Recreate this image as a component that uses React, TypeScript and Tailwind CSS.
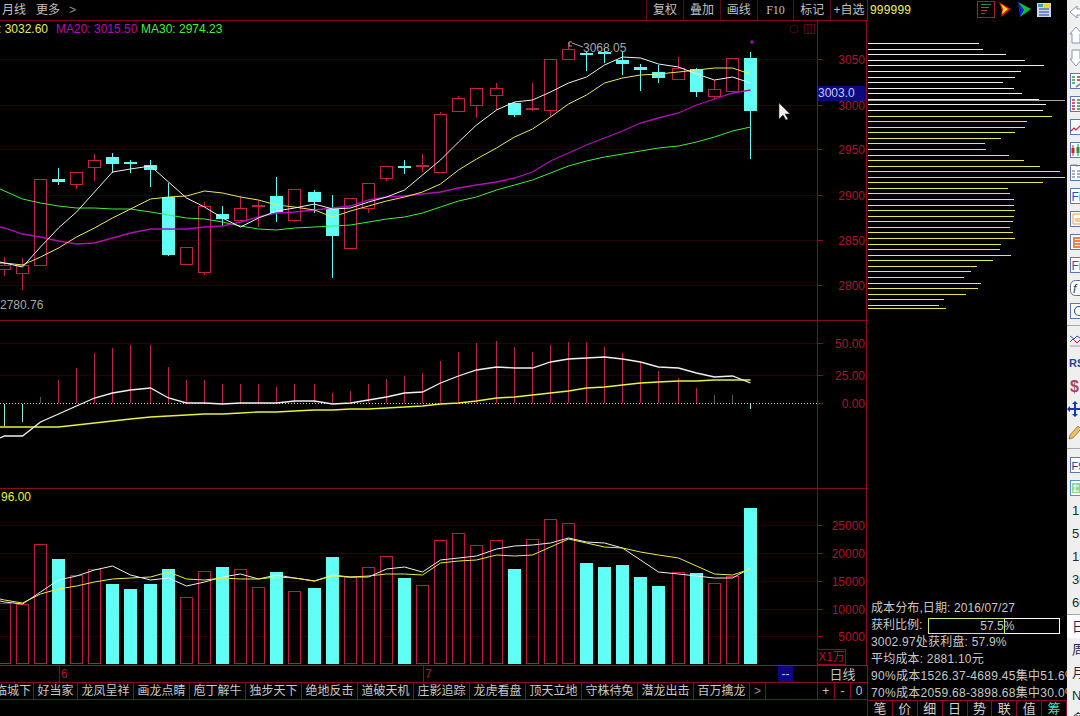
import type { ReactNode } from "react";

// candle centres, page px, kept on even pixel columns
const xs = [
  4.5, 22.5, 40.5, 59.5, 77.5, 95.5, 113.5, 131.5, 150.5, 168.5, 186.5, 204.5, 223.5, 241.5,
  259.5, 277.5, 295.5, 314.5, 332.5, 350.5, 368.5, 386.5, 405.5, 423.5, 441.5, 459.5, 477.5,
  496.5, 514.5, 532.5, 550.5, 568.5, 587.5, 605.5, 623.5, 641.5, 659.5, 678.5, 696.5, 714.5,
  732.5, 751.5,
].map((x) => Math.floor(x / 2) * 2 + 0.5);

// top, bottom, high, low, c = cyan / r = red
const candles: [number, number, number, number, string][] = [
  [265, 269, 257, 276, "r"], [265, 273, 258, 290, "r"], [179, 265, 179, 265, "r"],
  [179, 182, 168, 185, "c"], [172, 184, 172, 189, "r"], [160, 167, 154, 181, "r"],
  [157, 164, 153, 173, "c"], [162, 163, 160, 173, "c"], [165, 170, 160, 187, "c"],
  [197, 255, 183, 256, "c"], [247, 264, 247, 264, "r"], [206, 272, 202, 275, "r"],
  [214, 219, 206, 226, "c"], [208, 220, 196, 220, "r"], [205, 207, 200, 227, "r"],
  [196, 213, 177, 222, "c"], [189, 220, 189, 222, "r"], [192, 202, 190, 213, "c"],
  [209, 236, 195, 278, "c"], [198, 248, 198, 248, "r"], [183, 208, 183, 213, "r"],
  [166, 178, 166, 181, "r"], [166, 167, 160, 174, "c"], [165, 166, 154, 172, "r"],
  [114, 172, 112, 172, "r"], [98, 111, 96, 111, "r"], [88, 105, 88, 118, "r"],
  [88, 95, 83, 110, "r"], [103, 115, 102, 117, "c"], [108, 110, 83, 111, "r"],
  [59, 110, 59, 117, "r"], [49, 59, 42, 59, "r"], [53, 54, 51, 71, "c"],
  [52, 53, 48, 63, "c"], [60, 64, 52, 75, "c"], [67, 70, 64, 91, "c"],
  [72, 78, 65, 83, "c"], [68, 79, 57, 79, "r"], [69, 92, 68, 97, "c"],
  [89, 96, 80, 100, "r"], [58, 91, 58, 91, "r"], [58, 111, 52, 159, "c"],
];

const ma5 = [263, 267, 247, 228, 212, 192, 172, 169, 166, 182, 198, 207, 218, 227, 218, 211, 208, 204, 209, 208, 202, 197, 190, 175, 160, 142, 125, 110, 102, 100, 92, 83, 77, 65, 57, 58, 64, 67, 74, 80, 77, 83];
const ma10 = [263, 265, 257, 248, 237, 228, 218, 209, 199, 197, 196, 191, 193, 197, 200, 205, 207, 210, 217, 211, 206, 201, 197, 192, 184, 170, 159, 148, 137, 129, 117, 104, 95, 83, 78, 75, 74, 72, 70, 68, 68, 74];
const ma20 = [228, 234, 237, 241, 244, 243, 238, 233, 229, 229, 229, 227, 226, 222, 217, 213, 212, 210, 208, 206, 200, 197, 196, 194, 192, 188, 185, 182, 178, 172, 161, 153, 145, 138, 131, 123, 118, 113, 105, 99, 93, 90];
const ma30 = [191, 199, 203, 206, 208, 208, 209, 209, 212, 215, 218, 219, 222, 226, 229, 230, 228, 227, 226, 225, 222, 219, 217, 213, 207, 201, 197, 190, 185, 180, 173, 166, 161, 157, 154, 151, 148, 146, 142, 137, 131, 127];

const macdBars = [426, 422, 397, 380, 368, 353, 348, 345, 345, 367, 380, 380, 384, 384, 384, 387, 384, 384, 393, 391, 384, 379, 376, 373, 361, 352, 343, 341, 347, 352, 345, 342, 342, 347, 353, 362, 371, 378, 388, 395, 395, 409];
const dif = [436, 436, 422, 414, 406, 398, 393, 390, 388, 398, 403, 403, 404, 403, 403, 403, 401, 401, 404, 403, 400, 397, 393, 392, 383, 376, 370, 367, 368, 368, 362, 359, 358, 357, 359, 362, 367, 368, 373, 377, 376, 383];
const dea = [427, 427, 427, 427, 425, 423, 421, 419, 417, 416, 415, 414, 414, 413, 412, 412, 411, 410, 410, 409, 409, 408, 407, 406, 404, 403, 401, 398, 397, 395, 393, 391, 388, 387, 385, 383, 382, 381, 381, 380, 380, 380];

const volTops = [603, 604, 544, 559, 575, 569, 584, 589, 584, 569, 597, 571, 567, 569, 587, 572, 591, 588, 557, 577, 567, 556, 578, 585, 540, 533, 545, 540, 569, 539, 519, 523, 563, 567, 565, 577, 586, 572, 573, 583, 576, 508];
const volCyan = [3, 6, 7, 8, 9, 12, 15, 17, 18, 22, 28, 32, 33, 34, 35, 36, 38, 41];
const vol5 = [602, 604, 592, 580, 576, 570, 566, 575, 580, 578, 586, 582, 577, 574, 579, 575, 578, 581, 575, 577, 577, 569, 567, 572, 560, 558, 556, 549, 546, 545, 543, 538, 542, 543, 548, 560, 572, 574, 576, 578, 578, 568];
const vol10 = [600, 603, 594, 589, 586, 582, 579, 578, 577, 572, 579, 580, 578, 579, 579, 577, 578, 581, 576, 577, 576, 574, 574, 575, 563, 561, 560, 555, 556, 555, 547, 539, 543, 547, 548, 552, 555, 558, 566, 574, 575, 569];

const chips: [number, number, string][] = [
  [43, 358, "w"], [49, 370, "w"], [54, 438, "w"], [60, 495, "w"], [65, 552, "w"], [71, 482, "w"], [77, 465, "w"],
  [82, 428, "w"], [88, 462, "w"], [93, 487, "w"], [99, 537, "w"], [104, 557, "w"], [110, 550, "w"], [116, 577, "y"],
  [121, 500, "y"], [127, 495, "y"], [132, 465, "y"], [138, 423, "y"], [143, 375, "y"], [149, 377, "y"], [155, 447, "y"],
  [160, 492, "y"], [166, 540, "y"], [171, 600, "y"], [177, 614, "y"], [182, 550, "y"], [188, 443, "y"], [193, 450, "y"],
  [199, 462, "y"], [205, 463, "y"], [210, 465, "y"], [216, 462, "y"], [221, 459, "y"], [227, 450, "y"], [232, 459, "y"],
  [238, 464, "y"], [244, 423, "y"], [249, 420, "y"], [255, 453, "y"], [260, 400, "y"], [266, 351, "y"], [271, 332, "y"],
  [277, 312, "y"], [283, 363, "y"], [288, 354, "y"], [294, 318, "y"], [299, 252, "y"], [305, 237, "y"], [308, 257, "y"],
];

const tabs = ["好当家", "龙凤呈祥", "画龙点睛", "庖丁解牛", "独步天下", "绝地反击", "道破天机", "庄影追踪", "龙虎看盘", "顶天立地", "守株待兔", "潜龙出击", "百万擒龙"];

function Line({ ys, color, x0, w = 1 }: { ys: number[]; color: string; x0?: number; w?: number }) {
  const p = ys.map((y, i) => `${xs[i]},${y}`).join(" ");
  return <polyline points={(x0 !== undefined ? `0,${x0} ` : "") + p} fill="none" stroke={color} strokeWidth={w} />;
}

function Grid({ ys }: { ys: number[] }) {
  return (
    <g shapeRendering="crispEdges">
      {ys.map((y) => (
        <line key={y} x1="0" x2="817" y1={y + 0.5} y2={y + 0.5} stroke="#26000a" />
      ))}
    </g>
  );
}

function Axis({ top, height, labels }: { top: number; height: number; labels: [string, number][] }) {
  return (
    <div className="w-[50px] h-full border-x border-[#8c0a1e]">
      <svg width="48" height={height} viewBox={`818 ${top} 48 ${height}`} className="block">
        {labels.map(([t, y]) => (
          <g key={t}>
            <line x1="818" x2="823" y1={y + 0.5} y2={y + 0.5} stroke="#8c0a1e" shapeRendering="crispEdges" />
            <text x="865" y={y + 4.5} textAnchor="end" fontSize="12" fill="#b0142e">{t}</text>
          </g>
        ))}
      </svg>
    </div>
  );
}

function MainPlot() {
  return (
    <svg width="817" height="299" viewBox="0 21 817 299" className="block">
      <Grid ys={[59, 105, 149, 195, 240, 285]} />
      <g shapeRendering="crispEdges">
        {candles.map(([t, b, h, l, k], i) => {
          const x = xs[i];
          const col = k === "c" ? "#5ffff5" : "#c4213c";
          return (
            <g key={i}>
              <line x1={x} x2={x} y1={h} y2={l} stroke={col} />
              {k === "c" || b - t < 3 ? (
                <rect x={x - 6.5} y={t} width="13" height={Math.max(b - t, 2)} fill={col} />
              ) : (
                <rect x={x - 6} y={t + 0.5} width="12" height={b - t} fill="#000" stroke={col} />
              )}
            </g>
          );
        })}
      </g>
      <Line ys={ma30} color="#40f040" x0={189} />
      <Line ys={ma20} color="#b010b8" x0={227} w={1.3} />
      <Line ys={ma10} color="#e8e860" x0={263} />
      <Line ys={ma5} color="#f0f0f0" x0={262} />
      <text x="-2" y="33" fontSize="12" fill="#e8e860">: 3032.60</text>
      <text x="56" y="33" fontSize="12" fill="#b010b8">MA20: 3015.50</text>
      <text x="141" y="33" fontSize="12" fill="#40f040">MA30: 2974.23</text>
      <text x="0" y="309" fontSize="12" fill="#a8a8a8">2780.76</text>
      <text x="583" y="52" fontSize="12" fill="#a8a8a8">3068.05</text>
      <path d="M569 42h3M569 42v4h3M572 43l11 4" fill="none" stroke="#a8a8a8" />
      <circle cx="752" cy="42" r="1.8" fill="#a010a8" />
      <circle cx="794" cy="29" r="4" fill="none" stroke="#4a0810" />
      <path d="M804.5 24.5h10v9h-10zM808 25v8M811 25v8" fill="none" stroke="#5a0a14" />
      <path d="M779 103v16l4-4 3 5 2-1-3-5h5z" fill="#f0f0f0" stroke="#333" strokeWidth="0.5" />
    </svg>
  );
}

function MacdPlot() {
  return (
    <svg width="817" height="167" viewBox="0 321 817 167" className="block">
      <Grid ys={[343, 375]} />
      <line x1="0" x2="817" y1="403.5" y2="403.5" stroke="#b8d8d0" strokeDasharray="1 2" shapeRendering="crispEdges" />
      <g shapeRendering="crispEdges">
        {macdBars.map((y, i) => {
          const down = y > 403;
          const faint = i === 2 || i === 39 || i === 40;
          const col = down ? "#8af0d0" : faint ? "#705058" : "#c4213c";
          return <line key={i} x1={xs[i]} x2={xs[i]} y1={down ? 404 : y} y2={down ? y : 403} stroke={col} />;
        })}
      </g>
      <Line ys={dea} color="#e8f040" x0={427} w={1.3} />
      <Line ys={dif} color="#f0f0f0" x0={438} w={1.3} />
    </svg>
  );
}

function VolPlot() {
  return (
    <svg width="817" height="176" viewBox="0 489 817 176" className="block">
      <Grid ys={[525, 553, 581, 609, 636]} />
      <g shapeRendering="crispEdges">
        {volTops.map((t, i) =>
          volCyan.includes(i) ? (
            <rect key={i} x={xs[i] - 6.5} y={t} width="13" height={664 - t} fill="#5ffff5" />
          ) : (
            <rect key={i} x={xs[i] - 6} y={t + 0.5} width="12" height={663 - t} fill="none" stroke="#c01a3a" />
          ),
        )}
      </g>
      <Line ys={vol5} color="#f0f0f0" x0={601} />
      <Line ys={vol10} color="#e8f040" x0={599} />
      <text x="1" y="501" fontSize="12" fill="#e8f040">96.00</text>
    </svg>
  );
}

function Box({ children }: { children: ReactNode }) {
  return (
    <svg width="13" height="18" viewBox="0 0 13 18" className="block">
      <rect x="3.5" y="1.5" width="16" height="15" fill="#fff" stroke="#5a78b8" />
      {children}
    </svg>
  );
}

const icons: ReactNode[] = [
  <svg width="13" height="18" viewBox="0 0 13 18" className="block"><path d="M3 9l7-6v3h6v6h-6v3z" fill="#fff" stroke="#8894ac" /></svg>,
  <svg width="13" height="18" viewBox="0 0 13 18" className="block"><path d="M5 17V8H3l6-7 6 7h-2v9z" fill="#fff" stroke="#8894ac" /></svg>,
  <svg width="13" height="18" viewBox="0 0 13 18" className="block"><path d="M5 1v9H3l6 7 6-7h-2V1z" fill="#fff" stroke="#8894ac" /></svg>,
  <Box><path d="M5 5h3M5 8h3M5 11h3" stroke="#2a9a3a" strokeWidth="1.5" /><path d="M10 5h3M10 8h3" stroke="#c02838" strokeWidth="1.5" /><path d="M9 15l4-3" stroke="#8090a0" strokeWidth="2" /></Box>,
  <Box><path d="M5 5h3M5 8h3M5 11h3M5 14h3" stroke="#c02838" strokeWidth="1.5" /><path d="M10 5h3M10 8h3M10 11h3M10 14h3" stroke="#2a8a3a" strokeWidth="1.5" /></Box>,
  <Box><path d="M4 13l3-3 2 2 4-4" fill="none" stroke="#d02030" strokeWidth="1.2" /></Box>,
  <Box><path d="M6 4v11" stroke="#d02030" /><rect x="4.5" y="7" width="3" height="5" fill="#d02030" /><path d="M11 3v12" stroke="#20903a" /><rect x="9.5" y="6" width="3" height="6" fill="#20903a" /></Box>,
  <Box><path d="M5 7h3M5 10h3M5 13h3M10 7h3M10 10h3M10 13h3" stroke="#506080" /><path d="M4 1h6v2" fill="none" stroke="#7088b0" /></Box>,
  <Box><text x="4.5" y="14" fontSize="12" fill="#2060b0">Fin</text></Box>,
  <Box><path d="M6 4h7M6 4v10h7" fill="none" stroke="#e0a040" /><rect x="8" y="8" width="5" height="4" fill="#f0d080" /></Box>,
  <Box><path d="M8 5h5M8 8h5M8 11h5M8 14h5" stroke="#f08050" strokeWidth="2" /><path d="M7 4v11" stroke="#f08050" strokeWidth="2" /></Box>,
  <Box><text x="4.5" y="14" fontSize="12" fill="#2060b0">Fi</text></Box>,
  <svg width="13" height="18" viewBox="0 0 13 18" className="block"><rect x="3.5" y="1.5" width="16" height="15" rx="5" fill="#fff" stroke="#607090" /><text x="6" y="14" fontSize="12" fontStyle="italic" fill="#204080">f</text></svg>,
  <Box><circle cx="12" cy="9" r="4.5" fill="none" stroke="#2060b0" strokeWidth="1.2" /></Box>,
  <svg width="13" height="18" viewBox="0 0 13 18" className="block"><path d="M3 5l4 3 3-3 3 2" fill="none" stroke="#3050c0" /><path d="M3 11l3-3 4 4 3-3" fill="none" stroke="#d02030" /><path d="M3 15h10" stroke="#90a0b0" /></svg>,
  <svg width="13" height="18" viewBox="0 0 13 18" className="block"><text x="2" y="13" fontSize="11" fontWeight="700" fill="#204890">RS</text></svg>,
  <svg width="13" height="18" viewBox="0 0 13 18" className="block"><text x="3" y="15" fontSize="16" fontWeight="700" fill="#a84858">$</text></svg>,
  <svg width="13" height="18" viewBox="0 0 13 18" className="block"><path d="M8 1l3 3H9v4h4V6l3 3-3 3v-2H9v4h2l-3 3-3-3h2v-4H3v2L0 9l3-3v2h4V4H5z" fill="#1838b0" /></svg>,
  <svg width="13" height="18" viewBox="0 0 13 18" className="block"><path d="M2 16l1-4 8-9 3 3-8 9z" fill="#e8c060" stroke="#806030" strokeWidth="0.7" /></svg>,
  <Box><text x="4.5" y="13.5" fontSize="11" fill="#204080">F9</text></Box>,
  <svg width="13" height="18" viewBox="0 0 13 18" className="block"><rect x="3.5" y="1.5" width="16" height="15" fill="#fff" stroke="#5a90c8" /><rect x="5" y="4" width="8" height="10" fill="#90d890" /><path d="M6 7h6M8 5v8M6 12h6" stroke="#fff" /></svg>,
];

const Sep = ({ h }: { h: string }) => <div className={`${h} shrink-0 flex items-center`}><div className="w-full h-px bg-[#a8a8a8]" /></div>;

function Toolbar() {
  const row = (n: ReactNode, i: number) => (
    <div key={i} className="h-[23px] shrink-0 flex items-center">{n}</div>
  );
  const label = (t: string, cls = "") => (
    <div key={t} className={`h-[23px] shrink-0 flex items-center pl-[5px] text-[13px] leading-none text-[#202840] whitespace-nowrap ${cls}`}>{t}</div>
  );
  return (
    <div className="w-[13px] h-full bg-[#efefef] overflow-hidden flex flex-col shrink-0">
      {icons.slice(0, 14).map(row)}
      <Sep h="h-[6px]" />
      {icons.slice(14, 19).map(row)}
      <Sep h="h-[10px]" />
      {icons.slice(19).map(row)}
      {["1", "5", "15", "30", "60"].map((t) => label(t))}
      <div className="h-px shrink-0 bg-[#a8a8a8]" />
      {label("日", "bg-white")}
      {["周", "月", "N", "多"].map((t) => label(t))}
    </div>
  );
}

function ChipPanel() {
  return (
    <div className="w-[199px] h-full flex flex-col shrink-0 overflow-hidden">
      <div className="h-[40px] flex items-start pt-[3px] pl-[2px]">
        <span className="text-[12px] leading-[14px] text-[#f0f060] tracking-[0.2px]">999999</span>
        <div className="ml-[66px] flex items-center gap-[3px] -mt-[2px]">
          <svg width="18" height="17" viewBox="0 0 18 17" className="block">
            <rect x="0.5" y="0.5" width="17" height="16" fill="none" stroke="#a02028" />
            <path d="M4 3.5h10M4 6.5h8" stroke="#209048" /><path d="M4 9.5h6" stroke="#c03030" /><path d="M4 12.5h4" stroke="#c03030" />
          </svg>
          <svg width="13" height="16" viewBox="0 0 13 16" className="block"><path d="M1 0l12 7-10 8 1-7z" fill="#e01818" /><path d="M3 2l7 5-6 5 1-5z" fill="#f0e020" /></svg>
          <svg width="14" height="16" viewBox="0 0 14 16" className="ml-[3px] block"><path d="M1 0l13 7-11 8 2-7z" fill="#10c030" /><path d="M1 0l6 8-4 7z" fill="#1020d0" /></svg>
          <svg width="14" height="14" viewBox="0 0 14 14" className="ml-[3px] block"><rect width="14" height="14" fill="#c8d8f0" /><path d="M2 6h10M2 9h10M2 12h10" stroke="#2038a0" /><rect x="7" y="1" width="6" height="4" fill="#e8d820" /><rect x="1" y="1" width="5" height="3" fill="#40a0a0" /></svg>
        </div>
      </div>
      <div className="flex-1 min-h-0 overflow-hidden">
        <svg width="199" height="270" viewBox="868 40 199 270" className="block" shapeRendering="crispEdges">
          {chips.map(([y, z, k]) => (
            <line key={y} x1="868" x2={860 + z / 3} y1={y + 0.5} y2={y + 0.5} stroke={k === "w" ? "#f0f0f0" : "#e8e848"} />
          ))}
          <line x1="868" x2="1065" y1="100.5" y2="100.5" stroke="#a8a8a8" />
        </svg>
      </div>
      <div className="pl-[3px] text-[12px] leading-[17px] text-[#c8c8c8] whitespace-nowrap">
        <div className="tracking-[0.1px]">成本分布,日期: 2016/07/27</div>
        <div className="flex items-center">
          获利比例:
          <div className="relative ml-[6px] w-[132px] h-[16px] border border-white">
            <div className="w-[75px] h-full border border-[#c8f060] -m-px box-content" />
            <span className="absolute left-[51px] top-0 leading-[14px]">57.5%</span>
          </div>
        </div>
        <div className="tracking-[0.2px]">3002.97处获利盘: 57.9%</div>
        <div className="tracking-[0.2px]">平均成本: 2881.10元</div>
        <div className="tracking-[0.3px]">90%成本1526.37-4689.45集中51.6%</div>
        <div className="tracking-[0.3px]">70%成本2059.68-3898.68集中30.0%</div>
      </div>
      <div className="h-[16px] -mt-[2px] border-t border-[#8c0a1e] flex">
        {["笔", "价", "细", "日", "势", "联", "值", "筹"].map((t, i) => (
          <div key={t} className={`w-[25px] border-r border-[#8c0a1e] flex items-center justify-center text-[13px] leading-none ${i === 7 ? "text-[#40e0c0]" : "text-[#d0d0d0]"}`}>{t}</div>
        ))}
      </div>
    </div>
  );
}

export default function App() {
  return (
    <div className="w-[1080px] h-[716px] bg-black flex overflow-hidden font-['Liberation_Sans','Noto_Sans_CJK_SC',sans-serif] text-[12px] select-none">
      <div className="w-[868px] h-full flex flex-col shrink-0">
        {/* top bar */}
        <div className="h-[21px] shrink-0 border-b border-[#8c0a1e] flex justify-between text-[#c0c0c0]">
          <div className="flex items-center pl-[2px] gap-[10px]">
            <span>月线</span>
            <span>更多</span>
            <span className="text-[#909090] -ml-[1px]">&gt;</span>
          </div>
          <div className="flex border-r border-[#8c0a1e]">
            {["复权", "叠加", "画线", "F10", "标记", "+自选"].map((t) => (
              <div key={t} className={`h-full w-[36.8px] border-l border-[#5a0a16] flex items-center justify-center whitespace-nowrap ${t === "F10" ? "font-['Liberation_Serif',serif]" : ""}`}>{t}</div>
            ))}
          </div>
        </div>

        {/* price */}
        <div className="h-[300px] shrink-0 border-b border-[#8c0a1e] flex">
          <MainPlot />
          <div className="relative h-full">
            <Axis top={21} height={299} labels={[["3050", 59], ["3000", 105], ["2950", 149], ["2900", 195], ["2850", 240], ["2800", 285]]} />
            <div className="absolute left-[1px] top-[65px] w-[48px] h-[15px] bg-[#0a0a80] text-[#c8c8f8] text-[12px] leading-[15px]">3003.0</div>
          </div>
        </div>

        {/* macd */}
        <div className="h-[168px] shrink-0 border-b border-[#8c0a1e] flex">
          <MacdPlot />
          <Axis top={321} height={167} labels={[["50.00", 343], ["25.00", 375], ["0.00", 403]]} />
        </div>

        {/* volume */}
        <div className="h-[177px] shrink-0 border-b border-[#a00f22] flex">
          <VolPlot />
          <div className="relative h-full">
            <Axis top={489} height={176} labels={[["25000", 525], ["20000", 553], ["15000", 581], ["10000", 609], ["5000", 636]]} />
            <div className="absolute left-0 bottom-0 w-[29px] h-[16px] border border-[#8c0a1e] text-[#b0142e] leading-[14px] text-center whitespace-nowrap">X1万</div>
          </div>
        </div>

        {/* date axis */}
        <div className="h-[16px] shrink-0 flex">
          <div className="w-[817px] relative text-[#b0142e] leading-[16px]">
            <span className="absolute left-[59px] top-0 h-full border-l border-[#8c0a1e] pl-[1px]">6</span>
            <span className="absolute left-[423px] top-0 h-full border-l border-[#8c0a1e] pl-[1px]">7</span>
            <span className="absolute left-[778px] top-0 w-[15px] h-full bg-[#0a0a80] text-[#c8c8f8] text-center">--</span>
          </div>
          <div className="w-[51px] border-x border-[#8c0a1e] flex items-center justify-center text-[#c0c0c0] text-[13px] leading-none">日线</div>
        </div>

        {/* tabs */}
        <div className="h-[18px] shrink-0 border-y border-[#8c0a1e] flex text-[#c8c8c8]">
          <div className="w-[34px] border-r border-[#8c0a1e] flex items-center justify-end overflow-hidden whitespace-nowrap pr-[2px]"><span className="shrink-0">临城下</span></div>
          {tabs.map((t, i) => (
            <div key={t} className={`${i === 0 ? "w-[44px]" : "w-[56px]"} border-r border-[#8c0a1e] flex items-center justify-center whitespace-nowrap`}>{t}</div>
          ))}
          <div className="w-[16px] border-r border-[#8c0a1e] flex items-center justify-center text-[#909090]">&gt;</div>
          <div className="w-[51px] ml-auto border-x border-[#8c0a1e] flex text-[#c0c0c0]">
            <div className="flex-1 border-r border-[#8c0a1e] text-center leading-[16px]">+</div>
            <div className="flex-1 border-r border-[#8c0a1e] text-center leading-[16px]">-</div>
            <div className="flex-1 text-center leading-[16px]">0</div>
          </div>
        </div>
        <div className="flex-1 flex justify-end"><div className="border-r border-[#8c0a1e]" /></div>
      </div>
      <ChipPanel />
      <Toolbar />
    </div>
  );
}
